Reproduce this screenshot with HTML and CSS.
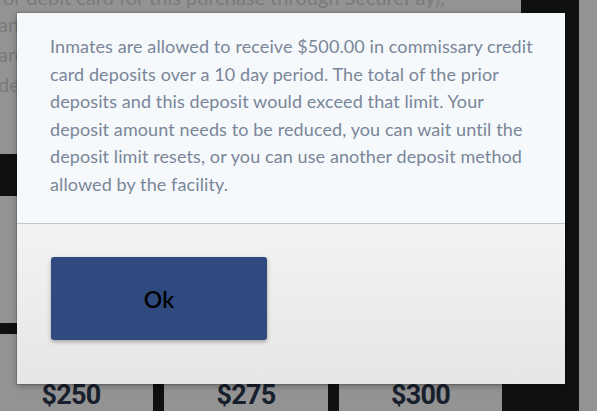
FILE: index.html
```html
<!DOCTYPE html>
<html lang="en">
<head>
<meta charset="utf-8">
<title>Deposit limit</title>
<link rel="stylesheet" href="styles.css">
</head>
<body>
<div class="page">
  <div class="content">
    <div class="intro">
      <div class="intro-text">
        <p class="intro-line">or debit card for this purchase through SecurePay),</p>
        <p class="intro-line">and select the amount you would like to deposit</p>
        <p class="intro-line">are applied to the account immediately</p>
        <p class="intro-line">deposits are subject to a convenience fee</p>
      </div>
      <div class="dark-col"></div>
    </div>
    <div class="bar-thick"></div>
    <div class="mid">
      <div class="mid-fill"></div>
      <div class="dark-col"></div>
    </div>
    <div class="bar-thin"></div>
    <div class="prices">
      <div class="price first">$250</div>
      <div class="sep"></div>
      <div class="price">$275</div>
      <div class="sep"></div>
      <div class="price narrow">$300</div>
      <div class="dark-fill"></div>
    </div>
  </div>
  <div class="gutter"></div>
</div>

<div class="modal" role="dialog" aria-modal="true">
  <div class="modal-body">
    <p class="message">Inmates are allowed to receive $500.00 in commissary credit card deposits over a 10 day period. The total of the prior deposits and this deposit would exceed that limit. Your deposit amount needs to be reduced, you can wait until the deposit limit resets, or you can use another deposit method allowed by the facility.</p>
  </div>
  <div class="modal-footer">
    <button class="ok-btn" type="button">Ok</button>
  </div>
</div>
</body>
</html>
```

FILE: styles.css
```css
* { box-sizing: border-box; }

html, body {
  margin: 0;
  padding: 0;
  width: 597px;
  height: 411px;
  overflow: hidden;
  background: #939393;
}

.page {
  display: flex;
  width: 597px;
  height: 411px;
  overflow: hidden;
}

.content {
  width: 579px;
  display: flex;
  flex-direction: column;
}

.gutter {
  flex: 1;
  background: #939393;
}

.intro {
  height: 154px;
  display: flex;
}

.intro-text {
  width: 521px;
  overflow: hidden;
  margin-top: -15px;
}

.intro-line {
  margin: 0;
  font-family: Lato, "Liberation Sans", sans-serif;
  font-size: 20px;
  line-height: 30px;
  color: #7a7a7a;
  white-space: nowrap;
}

.intro-line:first-child {
  line-height: 24px;
  padding-left: 3px;
}

.intro-line + .intro-line {
  margin-left: -2px;
}

.dark-col {
  width: 58px;
  background: #0f1111;
}

.bar-thick {
  height: 42px;
  background: #0f1111;
}

.mid {
  height: 127px;
  display: flex;
}

.mid-fill {
  flex: 1;
  background: #939393;
}

.bar-thin {
  height: 11px;
  background: #0f1111;
}

.prices {
  flex: 1;
  display: flex;
}

.price {
  width: 164px;
  flex: none;
  text-align: center;
  padding-top: 45px;
  font-family: Roboto, "Liberation Sans", sans-serif;
  font-weight: 700;
  font-size: 27px;
  line-height: 32px;
  letter-spacing: -0.8px;
  color: #17202c;
  background: #939393;
}

.price.first {
  margin-left: -11px;
}

.price.narrow {
  width: 163px;
}

.sep {
  width: 11px;
  flex: none;
  background: #0f1111;
}

.dark-fill {
  flex: 1;
  background: #0f1111;
}

/* Modal dialog */
.modal {
  position: fixed;
  left: 17px;
  top: 13px;
  width: 548px;
  height: 371px;
  display: flex;
  flex-direction: column;
  box-shadow: 0 0 0 1px rgba(0, 0, 0, 0.12), 0 2px 6px rgba(0, 0, 0, 0.3);
}

.modal-body {
  height: 211px;
  background: #f5f9fc;
  border-bottom: 1px solid #c4c7d2;
  padding: 20px 22px 0 33px;
}

.message {
  margin: 0;
  font-family: Lato, "Liberation Sans", sans-serif;
  font-size: 18px;
  letter-spacing: 0.1px;
  line-height: 27.5px;
  color: #7a8698;
}

.modal-footer {
  flex: 1;
  background: linear-gradient(#f3f3f3, #e6e6e6);
  padding: 33px 0 0 34px;
}

.ok-btn {
  display: flex;
  align-items: center;
  justify-content: center;
  width: 216px;
  height: 83px;
  border: none;
  border-radius: 3px;
  background: #2e4a7e;
  box-shadow: 0 2px 4px rgba(0, 0, 0, 0.3);
  font-family: Lato, "Liberation Sans", sans-serif;
  font-weight: 600;
  font-size: 23px;
  color: #000;
  padding: 0;
}
```
